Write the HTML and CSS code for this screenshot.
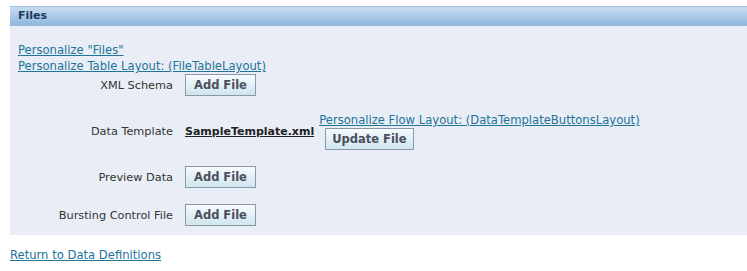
FILE: index.html
```html
<!DOCTYPE html>
<html>
<head>
<meta charset="utf-8">
<link rel="stylesheet" href="styles.css">
</head>
<body>
<div class="panel">
  <div class="panel-header">Files</div>
  <div class="panel-body">
    <a class="link" href="#">Personalize "Files"</a>
    <a class="link" href="#">Personalize Table Layout: (FileTableLayout)</a>
    <div class="rows">
      <div class="row">
        <div class="label">XML Schema</div>
        <div class="value"><button class="btn">Add File</button></div>
      </div>
      <div class="row">
        <div class="label">Data Template</div>
        <div class="value">
          <a class="file" href="#">SampleTemplate.xml</a>
          <div class="flow">
            <a class="link" href="#">Personalize Flow Layout: (DataTemplateButtonsLayout)</a>
            <button class="btn btn-update">Update File</button>
          </div>
        </div>
      </div>
      <div class="row">
        <div class="label">Preview Data</div>
        <div class="value"><button class="btn">Add File</button></div>
      </div>
      <div class="row">
        <div class="label">Bursting Control File</div>
        <div class="value"><button class="btn">Add File</button></div>
      </div>
    </div>
  </div>
</div>
<a class="link return" href="#">Return to Data Definitions</a>
</body>
</html>
```
FILE: styles.css
```css
html, body {
  margin: 0;
  padding: 0;
  background: #ffffff;
}
body {
  padding: 6px 0 0 10px;
  font-family: "DejaVu Sans", sans-serif;
  font-size: 11.6px;
  color: #333333;
}
.panel {
  background: #e9eef6;
  width: 737px;
}
.panel-header {
  height: 18px;
  border-top: 1px solid #a3c0dd;
  border-bottom: 1px solid #9bbbdb;
  background: linear-gradient(#c9dcf0, #8fb7df);
  font-weight: bold;
  color: #1c3a5e;
  line-height: 18px;
  padding-left: 8px;
  font-size: 11px;
}
.panel-body {
  padding: 16px 8px 9px 8px;
  display: flex;
  flex-direction: column;
}
.link {
  color: #22739a;
  text-decoration: underline;
  line-height: 16px;
}
.panel-body > .link {
  align-self: flex-start;
}
.rows {
  display: flex;
  flex-direction: column;
  gap: 16px;
}
.row {
  display: flex;
  align-items: center;
}
.label {
  width: 155px;
  text-align: right;
  padding-right: 12px;
  color: #333;
  font-size: 11.3px;
}
.value {
  display: flex;
  align-items: center;
  gap: 5px;
}
.btn {
  font-family: "DejaVu Sans", sans-serif;
  font-size: 11.5px;
  font-weight: bold;
  color: #4b4f5c;
  height: 22px;
  padding: 0 8px;
  border: 1px solid #8a98a7;
  background: linear-gradient(#f7fafc, #cfe5ee);
  border-radius: 0;
  margin: 0;
}
.file {
  font-weight: bold;
  color: #222;
  font-size: 11px;
  text-decoration: underline;
}
.flow {
  display: flex;
  flex-direction: column;
  align-items: flex-start;
}
.btn-update {
  margin-left: 6px;
  padding: 0 6px;
}
.return {
  display: inline-block;
  margin-top: 12px;
}
```
